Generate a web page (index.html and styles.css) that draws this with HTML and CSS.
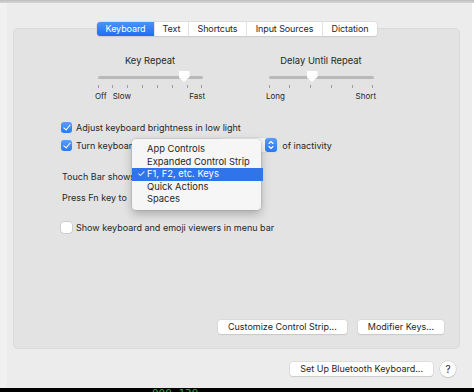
FILE: index.html
```html
<!DOCTYPE html>
<html lang="en">
<head>
    <meta charset="UTF-8">
    <link rel="stylesheet" href="styles.css">
    <meta name="viewport" content="width=device-width, initial-scale=1.0">
    <title>Keyboard</title>
</head>
<body>
    <div class="titlebar"></div>
    <div class="window">
        <div class="tabs">
            <span class="tab active t-keyboard">Keyboard</span>
            <span class="tab t-text">Text</span>
            <span class="tab t-shortcuts">Shortcuts</span>
            <span class="tab t-input">Input Sources</span>
            <span class="tab t-dictation">Dictation</span>
        </div>
        <div class="panel">
            <div class="sliders">
                <div class="slider-group">
                    <div class="slider-title">Key Repeat</div>
                    <div class="slider">
                        <div class="track"></div>
                        <div class="thumb" style="left: 81px"></div>
                    </div>
                    <div class="ticks">
                        <i></i><i></i><i></i><i></i><i></i><i></i><i></i><i></i>
                    </div>
                    <div class="slider-labels">
                        <span>Off</span><span class="slow">Slow</span><span class="end">Fast</span>
                    </div>
                </div>
                <div class="slider-group">
                    <div class="slider-title">Delay Until Repeat</div>
                    <div class="slider">
                        <div class="track"></div>
                        <div class="thumb" style="left: 38px"></div>
                    </div>
                    <div class="ticks">
                        <i></i><i></i><i></i><i></i><i></i><i></i>
                    </div>
                    <div class="slider-labels">
                        <span>Long</span><span class="end">Short</span>
                    </div>
                </div>
            </div>

            <div class="row first">
                <span class="check on"></span>Adjust keyboard brightness in low light
            </div>
            <div class="row">
                <span class="check on"></span>Turn keyboard backlight off after
                <span class="select">
                    <span class="stepper">
                        <svg width="12" height="14" viewBox="0 0 12 14">
                            <path d="M4 5.5 L6 3.5 L8 5.5 M4 8.5 L6 10.5 L8 8.5" fill="none" stroke="#fff" stroke-width="1.1" stroke-linecap="round" stroke-linejoin="round"/>
                        </svg>
                    </span>
                </span>
                of inactivity
            </div>
            <div class="row plain touch">Touch Bar shows</div>
            <div class="row plain fn">Press Fn key to</div>
            <div class="row viewers">
                <span class="check"></span>Show keyboard and emoji viewers in menu bar
            </div>

            <div class="buttons">
                <span class="btn">Customize Control Strip...</span>
                <span class="btn">Modifier Keys...</span>
            </div>
        </div>
        <div class="footer">
            <span class="btn">Set Up Bluetooth Keyboard...</span>
            <span class="help">?</span>
        </div>
    </div>
    <div class="dock"><span>000 139</span></div>

    <div class="menu">
        <div class="item">App Controls</div>
        <div class="item">Expanded Control Strip</div>
        <div class="item selected"><span class="tick">&#10003;</span>F1, F2, etc. Keys</div>
        <div class="item">Quick Actions</div>
        <div class="item">Spaces</div>
    </div>
</body>
</html>
```

FILE: styles.css
```css
body {
  margin: 0;
  width: 474px;
  height: 392px;
  overflow: hidden;
  background: #fff;
  font-family: Inter, "Open Sans", sans-serif;
  font-size: 9px;
  color: #262626;
  position: relative;
}
.titlebar {
  height: 3px;
  background: linear-gradient(#bdbdbd, #d6d6d6);
}
.window {
  width: 472px;
  height: 385px;
  background: #ececec;
  border-left: 7px solid #f1f1f1;
  box-sizing: border-box;
  padding-top: 19px;
}
.tabs {
  display: flex;
  margin-left: 90px;
  width: max-content;
  height: 14px;
  background: #fff;
  border-radius: 3px;
  box-shadow: 0 0 0 0.5px #d0d0d0, 0 1px 1px rgba(0,0,0,0.12);
  position: relative;
  z-index: 1;
}
.tab {
  line-height: 14px;
  text-align: center;
  border-left: 1px solid #e2e2e2;
  font-size: 9px;
  letter-spacing: -0.1px;
  white-space: nowrap;
  box-sizing: border-box;
}
.tab:first-child {
  border-left: none;
}
.t-keyboard { width: 57px; }
.t-text { width: 34px; }
.t-shortcuts { width: 58px; }
.t-input { width: 76px; }
.t-dictation { width: 55px; }
.tab.active {
  background: linear-gradient(#4b93f8, #1f6ef1);
  color: #fff;
  border-radius: 3px 0 0 3px;
}
.panel {
  margin: -8px 12px 0 6px;
  height: 321px;
  background: #e3e3e3;
  border: 1px solid #dadada;
  border-radius: 5px;
  box-sizing: border-box;
  padding-top: 26px;
  position: relative;
}
.sliders {
  display: flex;
  gap: 51px;
  margin-left: 76px;
}
.slider-group {
  width: 120px;
  text-align: center;
}
.slider-title {
  font-size: 9.4px;
  line-height: 12px;
  margin-bottom: 4px;
}
.slider {
  position: relative;
  width: 105px;
  height: 14px;
  margin: 0 auto;
}
.track {
  position: absolute;
  left: 0;
  right: 0;
  top: 5px;
  height: 3px;
  border-radius: 2px;
  background: #b9b9b9;
}
.thumb {
  position: absolute;
  top: 0;
  width: 11px;
  height: 11px;
  background: #fff;
  clip-path: polygon(0 0, 100% 0, 100% 55%, 50% 100%, 0 55%);
  filter: drop-shadow(0 0 0.5px #999);
}
.ticks {
  display: flex;
  justify-content: space-between;
  width: 105px;
  margin: 0 auto;
  height: 4px;
}
.ticks i {
  width: 1px;
  height: 3px;
  background: #9d9d9d;
}
.slider-labels {
  display: flex;
  width: 110px;
  margin: 2px auto 0;
  font-size: 8px;
  line-height: 10px;
}
.slider-labels .slow {
  margin-left: 6px;
}
.slider-labels .end {
  margin-left: auto;
}
.row {
  display: flex;
  align-items: center;
  height: 18px;
  margin-left: 47px;
  white-space: nowrap;
}
.row.first {
  margin-top: 17px;
}
.row.plain {
  margin-left: 48px;
}
.row.touch {
  margin-top: 13px;
}
.row.fn {
  margin-top: 3px;
}
.row.viewers {
  margin-top: 12px;
}
.check {
  width: 11px;
  height: 11px;
  border-radius: 3px;
  margin-right: 4px;
  background: #fff;
  box-shadow: 0 0 0 0.5px #b8b8b8;
  position: relative;
}
.check.on {
  background: linear-gradient(#5a9cf8, #2a78f2);
  box-shadow: none;
}
.check.on::after {
  content: "";
  position: absolute;
  left: 3.5px;
  top: 1.5px;
  width: 3px;
  height: 6px;
  border: solid #fff;
  border-width: 0 1.5px 1.5px 0;
  transform: rotate(40deg);
}
.select {
  display: inline-flex;
  justify-content: flex-end;
  width: 58px;
  height: 14px;
  margin: 0 5px 0 4px;
  background: #f5f5f5;
  border-radius: 3px;
  box-shadow: 0 0 0 0.5px #d6d6d6;
}
.stepper {
  width: 12px;
  height: 14px;
  border-radius: 3px;
  background: linear-gradient(#5a9cf8, #2a78f2);
}
.stepper svg {
  display: block;
}
.buttons {
  position: absolute;
  right: 15px;
  bottom: 14px;
  display: flex;
  gap: 11px;
}
.btn {
  display: inline-block;
  background: #fff;
  border-radius: 3px;
  height: 14px;
  line-height: 14px;
  padding: 0 10px;
  box-shadow: 0 0 0 0.5px #cfcfcf, 0 1px 1px rgba(0,0,0,0.15);
  font-size: 9px;
}
.footer {
  display: flex;
  justify-content: flex-end;
  align-items: center;
  gap: 7px;
  margin: 12px 16px 0 0;
}
.help {
  width: 16px;
  height: 16px;
  border-radius: 50%;
  background: #fff;
  box-shadow: 0 0 0 0.5px #c8c8c8, 0 1px 1px rgba(0,0,0,0.15);
  text-align: center;
  line-height: 16px;
  font-size: 10px;
}
.dock {
  height: 4px;
  background: #000;
  overflow: hidden;
  padding-left: 152px;
}
.dock span {
  display: block;
  color: #3fa64a;
  font-size: 11px;
  line-height: 11px;
  font-family: "DejaVu Sans Mono", monospace;
}
.menu {
  position: absolute;
  left: 132px;
  top: 139px;
  width: 129px;
  padding: 4px 0;
  background: #f6f6f6;
  border-radius: 4px;
  box-shadow: 0 0 0 0.5px rgba(0,0,0,0.15), 0 4px 10px rgba(0,0,0,0.25);
  box-sizing: border-box;
}
.item {
  height: 12.6px;
  line-height: 12.6px;
  padding-left: 15px;
  font-size: 9.4px;
  position: relative;
}
.item.selected {
  background: #2f74ea;
  color: #fff;
  margin-right: -2px;
}
.tick {
  position: absolute;
  left: 5px;
}
```
